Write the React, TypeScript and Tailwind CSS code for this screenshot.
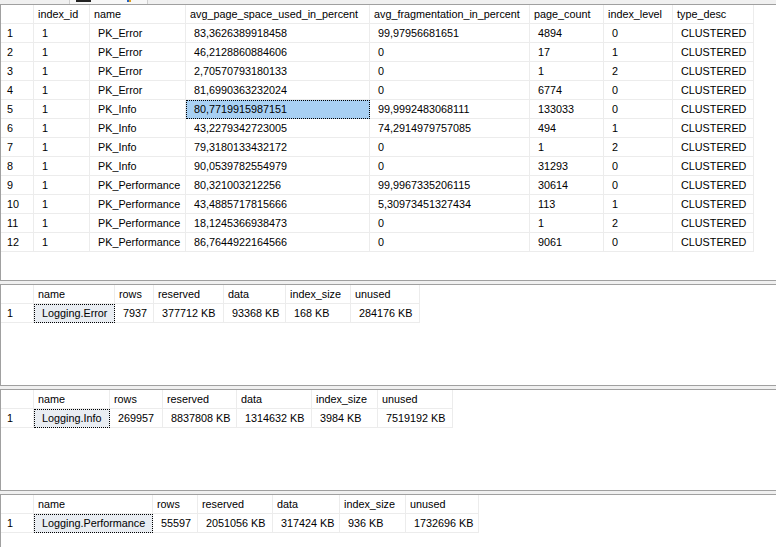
import clsx from "clsx";

type Grid = {
  widths: string[];
  headers: string[];
  rows: string[][];
  sel: [number, number];
  selKind: "blue" | "gray";
  height: string;
};

const FONT = { fontFamily: '"Liberation Sans", Arial, sans-serif' };

const grids: Grid[] = [
  {
    height: "h-[275px]",
    widths: ["w-[56px]", "w-[96px]", "w-[184px]", "w-[160px]", "w-[74px]", "w-[69px]", "w-[81px]"],
    headers: [
      "index_id",
      "name",
      "avg_page_space_used_in_percent",
      "avg_fragmentation_in_percent",
      "page_count",
      "index_level",
      "type_desc",
    ],
    rows: [
      ["1", "PK_Error", "83,3626389918458", "99,97956681651", "4894", "0", "CLUSTERED"],
      ["1", "PK_Error", "46,2128860884606", "0", "17", "1", "CLUSTERED"],
      ["1", "PK_Error", "2,70570793180133", "0", "1", "2", "CLUSTERED"],
      ["1", "PK_Error", "81,6990363232024", "0", "6774", "0", "CLUSTERED"],
      ["1", "PK_Info", "80,7719915987151", "99,9992483068111", "133033", "0", "CLUSTERED"],
      ["1", "PK_Info", "43,2279342723005", "74,2914979757085", "494", "1", "CLUSTERED"],
      ["1", "PK_Info", "79,3180133432172", "0", "1", "2", "CLUSTERED"],
      ["1", "PK_Info", "90,0539782554979", "0", "31293", "0", "CLUSTERED"],
      ["1", "PK_Performance", "80,321003212256", "99,9967335206115", "30614", "0", "CLUSTERED"],
      ["1", "PK_Performance", "43,4885717815666", "5,30973451327434", "113", "1", "CLUSTERED"],
      ["1", "PK_Performance", "18,1245366938473", "0", "1", "2", "CLUSTERED"],
      ["1", "PK_Performance", "86,7644922164566", "0", "9061", "0", "CLUSTERED"],
    ],
    sel: [4, 2],
    selKind: "blue",
  },
  {
    height: "h-[100px]",
    widths: ["w-[81px]", "w-[39px]", "w-[70px]", "w-[62px]", "w-[65px]", "w-[69px]"],
    headers: ["name", "rows", "reserved", "data", "index_size", "unused"],
    rows: [["Logging.Error", "7937", "377712 KB", "93368 KB", "168 KB", "284176 KB"]],
    sel: [0, 0],
    selKind: "gray",
  },
  {
    height: "h-[100px]",
    widths: ["w-[76px]", "w-[53px]", "w-[74px]", "w-[75px]", "w-[66px]", "w-[75px]"],
    headers: ["name", "rows", "reserved", "data", "index_size", "unused"],
    rows: [["Logging.Info", "269957", "8837808 KB", "1314632 KB", "3984 KB", "7519192 KB"]],
    sel: [0, 0],
    selKind: "gray",
  },
  {
    height: "flex-1",
    widths: ["w-[119px]", "w-[45px]", "w-[75px]", "w-[67px]", "w-[66px]", "w-[73px]"],
    headers: ["name", "rows", "reserved", "data", "index_size", "unused"],
    rows: [["Logging.Performance", "55597", "2051056 KB", "317424 KB", "936 KB", "1732696 KB"]],
    sel: [0, 0],
    selKind: "gray",
  },
];

function ResultGrid({ grid }: { grid: Grid }) {
  return (
    <div className={clsx("border-l border-[#a0a0a0] bg-white overflow-hidden", grid.height)}>
      <div className="flex">
        <div className="w-[33px] h-[19px] shrink-0 border-r border-b border-[#ececec]" />
        {grid.headers.map((h, i) => (
          <div
            key={h}
            className={clsx(
              "h-[19px] shrink-0 border-r border-b border-[#ececec] pl-[4px] leading-[18px] whitespace-nowrap overflow-hidden",
              grid.widths[i],
            )}
          >
            {h}
          </div>
        ))}
      </div>
      {grid.rows.map((row, r) => (
        <div key={r} className="flex">
          <div className="w-[33px] h-[19px] shrink-0 border-r border-b border-[#ececec] pl-[6px] leading-[18px]">
            {r + 1}
          </div>
          {row.map((value, c) => {
            const selected = grid.sel[0] === r && grid.sel[1] === c;
            return (
              <div
                key={c}
                className={clsx(
                  "h-[19px] shrink-0 leading-[17px] whitespace-nowrap overflow-hidden",
                  grid.widths[c],
                  selected
                    ? "border border-dotted border-black pl-[7px]"
                    : "border-r border-b border-[#ececec] pl-[8px] pt-px",
                  selected && grid.selKind === "blue" && "bg-[#a8d0f3]",
                  selected && grid.selKind === "gray" && "bg-[#e9edf2]",
                )}
              >
                {value}
              </div>
            );
          })}
        </div>
      ))}
    </div>
  );
}

function Splitter() {
  return <div className="h-[5px] shrink-0 border-y border-[#a0a0a0] bg-[#f0f0f0]" />;
}

export default function App() {
  return (
    <div className="w-[776px] h-[547px] flex flex-col bg-white text-[10.8px] text-black overflow-hidden" style={FONT}>
      <div className="h-[5px] shrink-0 flex bg-[#f0f0f0] border-b border-[#a0a0a0]">
        <div className="ml-[69px] w-[79px] flex border-x border-[#cfcfcf] bg-[#f7f7f7]">
          <span className="ml-[6px] w-[15px] h-[2px] bg-[#222]" />
          <span className="ml-[36px] w-[2px] h-[2px] bg-[#1e60c8]" />
          <span className="w-[2px] h-[2px] bg-[#e0a020]" />
        </div>
      </div>
      {grids.map((g, i) => (
        <div key={i} className={clsx("flex flex-col", i === grids.length - 1 && "flex-1")}>
          {i > 0 && <Splitter />}
          <ResultGrid grid={g} />
        </div>
      ))}
    </div>
  );
}
